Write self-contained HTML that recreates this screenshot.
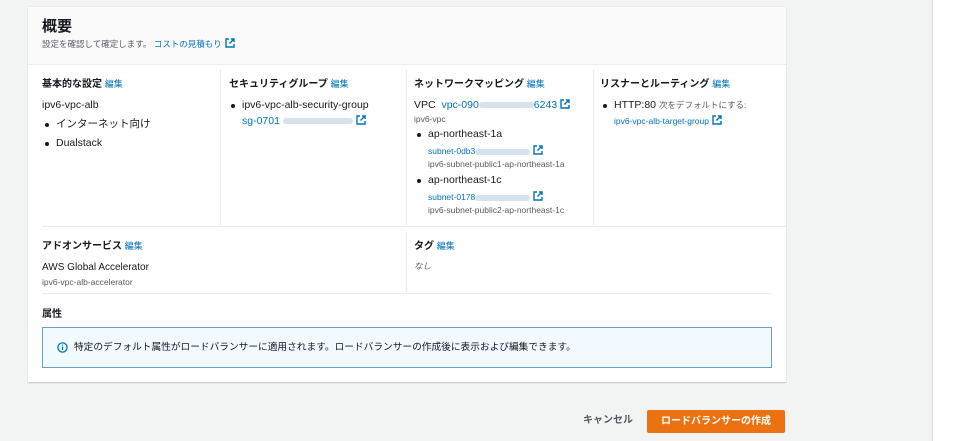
<!DOCTYPE html>
<html><head><meta charset="utf-8"><style>
*{margin:0;padding:0;box-sizing:border-box}
body{width:960px;height:441px;background:#f2f3f3;font-family:"Liberation Sans","Noto Sans CJK JP",sans-serif;color:#16191f;position:relative;overflow:hidden}
.rw{position:absolute;left:932px;top:0;width:28px;height:441px;background:#fff;border-left:1px solid #d5dbdb}
.card{position:absolute;left:28px;top:6px;width:758px;height:376px;background:#fff;box-shadow:0 1px 1px rgba(0,0,0,.2);border-top:1px solid #eaeded}
.hd{height:58px;background:#fafafa;border-bottom:1px solid #eaeded;padding:10px 14px}
.hd h1{font-size:15px;font-weight:bold;line-height:20px}
.hd p{font-size:8.5px;color:#545b64;margin-top:1px}
a,.l{color:#0073bb;text-decoration:none}
.ab{position:absolute;font-size:10.5px;line-height:14px}
.h{font-weight:bold;font-size:10px}
.h .l{font-weight:normal;font-size:9px}
.s{font-size:8.5px;color:#545b64}
.vl{position:absolute;width:1px;background:#eaeded}
.hl{position:absolute;height:1px;background:#eaeded}
.bl{position:absolute}
.bl:before{content:"";position:absolute;left:-11px;top:6px;width:4px;height:4px;border-radius:50%;background:#16191f}
.ext{display:inline-block;vertical-align:-1px;margin-left:3px}
.blur{display:inline-block;height:6px;width:60px;background:#d6e2ec;border-radius:3px;vertical-align:middle}
</style></head><body>
<div class="rw"></div>
<div class="card">
<div class="hd"><h1>概要</h1><p>設定を確認して確定します。 <a>コストの見積もり</a><svg class="ext" width="10" height="10" viewBox="0 0 10 10"><path d="M4 1H1v8h8V6M6 1h3v3M9 1L4.5 5.5" fill="none" stroke="#0073bb" stroke-width="1.4"/></svg></p></div>
</div>
<svg width="0" height="0" style="position:absolute"><symbol id="e" viewBox="0 0 10 10"><path d="M4 1H1v8h8V6M6 1h3v3M9 1L4.5 5.5" fill="none" stroke="#0073bb" stroke-width="1.4"/></symbol></svg>
<div class="vl" style="left:220px;top:69px;height:156px"></div>
<div class="vl" style="left:406px;top:69px;height:156px"></div>
<div class="vl" style="left:593px;top:69px;height:156px"></div>
<div class="hl" style="left:42px;top:226px;width:744px"></div>
<div class="vl" style="left:406px;top:232px;height:60px"></div>
<div class="hl" style="left:42px;top:293px;width:730px"></div>

<div class="ab h" style="left:42px;top:77px">基本的な設定 <span class="l">編集</span></div>
<div class="ab" style="left:42px;top:98px">ipv6-vpc-alb</div>
<div class="ab bl" style="left:56px;top:117px">インターネット向け</div>
<div class="ab bl" style="left:56px;top:136px">Dualstack</div>

<div class="ab h" style="left:229px;top:77px">セキュリティグループ <span class="l">編集</span></div>
<div class="ab bl" style="left:242px;top:98px">ipv6-vpc-alb-security-group</div>
<div class="ab" style="left:242px;top:114px"><span class="l">sg-0701</span> <span class="blur" style="width:70px"></span><svg class="ext" width="10" height="10"><use href="#e"/></svg></div>

<div class="ab h" style="left:414px;top:77px">ネットワークマッピング <span class="l">編集</span></div>
<div class="ab" style="left:414px;top:98px">VPC&nbsp; <span class="l">vpc-090</span><span class="blur" style="width:55px"></span><span class="l">6243</span><svg class="ext" width="10" height="10"><use href="#e"/></svg></div>
<div class="ab s" style="left:414px;top:112px">ipv6-vpc</div>
<div class="ab bl" style="left:428px;top:127px">ap-northeast-1a</div>
<div class="ab s" style="left:428px;top:144px"><span class="l">subnet-0db3</span><span class="blur" style="width:55px"></span><svg class="ext" width="10" height="10"><use href="#e"/></svg></div>
<div class="ab s" style="left:428px;top:157px">ipv6-subnet-public1-ap-northeast-1a</div>
<div class="ab bl" style="left:428px;top:173px">ap-northeast-1c</div>
<div class="ab s" style="left:428px;top:190px"><span class="l">subnet-0178</span><span class="blur" style="width:55px"></span><svg class="ext" width="10" height="10"><use href="#e"/></svg></div>
<div class="ab s" style="left:428px;top:203px">ipv6-subnet-public2-ap-northeast-1c</div>

<div class="ab h" style="left:600px;top:77px">リスナーとルーティング <span class="l">編集</span></div>
<div class="ab bl" style="left:614px;top:98px">HTTP:80 <span class="s">次をデフォルトにする:</span></div>
<div class="ab s" style="left:614px;top:114px"><span class="l">ipv6-vpc-alb-target-group</span><svg class="ext" width="10" height="10"><use href="#e"/></svg></div>

<div class="ab h" style="left:42px;top:239px">アドオンサービス <span class="l">編集</span></div>
<div class="ab" style="left:42px;top:261px;font-size:10px">AWS Global Accelerator</div>
<div class="ab s" style="left:42px;top:275px">ipv6-vpc-alb-accelerator</div>
<div class="ab h" style="left:414px;top:239px">タグ <span class="l">編集</span></div>
<div class="ab s" style="left:414px;top:259px;font-style:italic">なし</div>

<div class="ab h" style="left:42px;top:308px">属性</div>
<div style="position:absolute;left:42px;top:327px;width:730px;height:41px;background:#f1faff;border:1px solid #6a9fcf"></div>
<svg style="position:absolute;left:57px;top:342px" width="11" height="11" viewBox="0 0 11 11"><circle cx="5.5" cy="5.5" r="4.6" fill="none" stroke="#0073bb" stroke-width="1.3"/><path d="M5.5 4.5v3.5M5.5 2.6v1" stroke="#0073bb" stroke-width="1.3"/></svg>
<div class="ab" style="left:74px;top:341px;font-size:9.7px">特定のデフォルト属性がロードバランサーに適用されます。ロードバランサーの作成後に表示および編集できます。</div>

<div class="ab" style="left:583px;top:414px;font-size:10px;font-weight:bold;color:#545b64">キャンセル</div>
<div style="position:absolute;left:647px;top:410px;width:138px;height:23px;background:#ec7211;color:#fff;font-size:10px;font-weight:bold;text-align:center;line-height:23px;border-radius:2px">ロードバランサーの作成</div>
</body></html>
